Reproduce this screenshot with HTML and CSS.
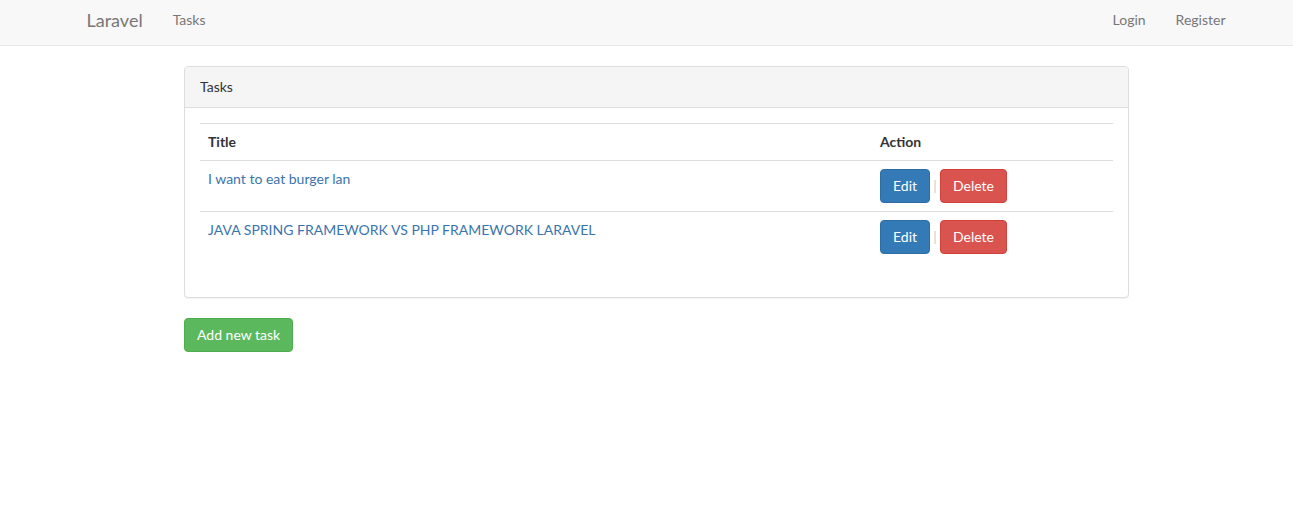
FILE: index.html
```html
<!DOCTYPE html>
<html lang="en">
<head>
<meta charset="utf-8">
<title>Laravel</title>
<link rel="stylesheet" href="styles.css">
</head>
<body>
<nav class="navbar">
  <div class="container nav-inner">
    <div class="nav-left">
      <a class="brand" href="#">Laravel</a>
      <a class="nav-link" href="#">Tasks</a>
    </div>
    <div class="nav-right">
      <a class="nav-link" href="#">Login</a>
      <a class="nav-link" href="#">Register</a>
    </div>
  </div>
</nav>
<main class="container">
  <div class="content">
    <section class="panel">
      <div class="panel-heading">Tasks</div>
      <div class="panel-body">
        <table class="table">
          <thead>
            <tr><th class="col-title">Title</th><th>Action</th></tr>
          </thead>
          <tbody>
            <tr>
              <td><a class="task-link" href="#">I want to eat burger lan</a></td>
              <td><a class="btn btn-primary" href="#">Edit</a><span class="sep">|</span><button class="btn btn-danger">Delete</button></td>
            </tr>
            <tr>
              <td><a class="task-link" href="#">JAVA SPRING FRAMEWORK VS PHP FRAMEWORK LARAVEL</a></td>
              <td><a class="btn btn-primary" href="#">Edit</a><span class="sep">|</span><button class="btn btn-danger">Delete</button></td>
            </tr>
          </tbody>
        </table>
      </div>
    </section>
    <a class="btn btn-success" href="#">Add new task</a>
  </div>
</main>
</body>
</html>
```

FILE: styles.css
```css
* { box-sizing: border-box; }
html, body { margin: 0; padding: 0; }
body {
  font-family: Lato, "Open Sans", "Liberation Sans", sans-serif;
  font-size: 14px;
  line-height: 20px;
  color: #333;
  background: #fff;
}
a { text-decoration: none; }

.container {
  width: 1170px;
  margin-left: calc(50% - 575px);
  padding: 0 15px;
}

.navbar {
  background: #f8f8f8;
  border-bottom: 1px solid #e7e7e7;
  height: 46px;
}
.nav-inner {
  display: flex;
  justify-content: space-between;
  align-items: center;
  height: 45px;
  padding-bottom: 5px;
}
.nav-left, .nav-right { display: flex; align-items: center; }
.brand {
  color: #777;
  font-size: 18px;
  line-height: 20px;
  padding: 0 15px 0 0;
  margin-right: 15px;
}
.nav-link {
  color: #777;
  padding: 0 15px;
  line-height: 20px;
}
.nav-left .nav-link { padding-left: 0; }
.nav-right .nav-link:last-child { padding-right: 0; margin-right: 1px; }

.content {
  width: 945px;
  margin: 20px 0 0 97.5px;
}

.panel {
  border: 1px solid #ddd;
  border-radius: 4px;
  margin-bottom: 20px;
  background: #fff;
  box-shadow: 0 1px 1px rgba(0,0,0,0.05);
}
.panel-heading {
  background: #f5f5f5;
  border-bottom: 1px solid #ddd;
  border-radius: 3px 3px 0 0;
  padding: 10px 15px;
  color: #333;
}
.panel-body { padding: 15px; }

.table {
  width: 100%;
  border-collapse: collapse;
  border-spacing: 0;
  margin-bottom: 20px;
}
.table th, .table td {
  padding: 8px;
  text-align: left;
  vertical-align: top;
  border-top: 1px solid #ddd;
}
.table thead th {
  font-weight: bold;
  vertical-align: bottom;
  border-bottom: 1px solid #ddd;
}
.table tbody tr:first-child td { border-top: 0; }
.col-title { width: 672px; }

.task-link { color: #3a74ad; }
.sep {
  color: #ccc;
  display: inline-block;
  width: 10px;
  text-align: center;
  vertical-align: middle;
}

.btn {
  display: inline-block;
  font-family: inherit;
  font-size: 14px;
  line-height: 20px;
  padding: 6px 12px;
  border: 1px solid transparent;
  border-radius: 4px;
  color: #fff;
  cursor: pointer;
  vertical-align: middle;
  margin: 0;
}
.btn-primary { background: #337ab7; border-color: #2e6da4; }
.btn-danger { background: #d9534f; border-color: #d43f3a; }
.btn-success { background: #5cb85c; border-color: #4cae4c; }
```
